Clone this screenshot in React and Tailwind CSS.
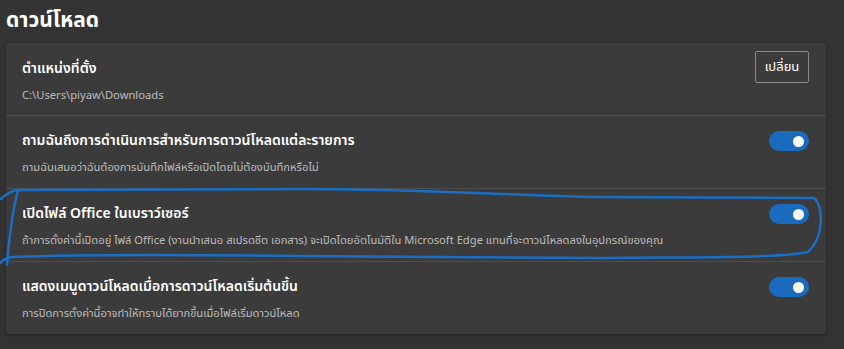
import React from "react";

const rows = [
  {
    title: "ถามฉันถึงการดำเนินการสำหรับการดาวน์โหลดแต่ละรายการ",
    sub: "ถามฉันเสมอว่าฉันต้องการบันทึกไฟล์หรือเปิดโดยไม่ต้องบันทึกหรือไม่",
  },
  {
    title: "เปิดไฟล์ Office ในเบราว์เซอร์",
    sub: "ถ้าการตั้งค่านี้เปิดอยู่ ไฟล์ Office (งานนำเสนอ สเปรดชีต เอกสาร) จะเปิดโดยอัตโนมัติใน Microsoft Edge แทนที่จะดาวน์โหลดลงในอุปกรณ์ของคุณ",
  },
  {
    title: "แสดงเมนูดาวน์โหลดเมื่อการดาวน์โหลดเริ่มต้นขึ้น",
    sub: "การปิดการตั้งค่านี้อาจทำให้ทราบได้ยากขึ้นเมื่อไฟล์เริ่มดาวน์โหลด",
  },
];

const Toggle = () => (
  <div className="w-[40px] h-[20px] rounded-full bg-[#1a6bbd] flex items-center justify-end pr-[5px] shrink-0">
    <div className="w-[11px] h-[11px] rounded-full bg-white" />
  </div>
);

const App = () => {
  return (
    <div className="relative w-[844px] h-[349px] bg-[#333333] overflow-hidden font-['Segoe_UI','Noto_Sans','Noto_Sans_Thai',sans-serif]">
      <div className="px-[6px] pt-[5px]">
        <h1 className="text-[21px] leading-[29px] font-bold text-white">ดาวน์โหลด</h1>

        <div className="mt-[9px] w-[820px] bg-[#3b3b3b] rounded-[4px] shadow-[0_1px_3px_rgba(0,0,0,0.35)]">
          {/* location */}
          <div className="h-[72px] pl-[16px] pr-[17px] flex items-start justify-between">
            <div className="pt-[15px]">
              <div className="text-[14px] leading-[20px] font-semibold text-white">ตำแหน่งที่ตั้ง</div>
              <div className="mt-[9px] text-[11.2px] leading-[16px] text-[#bdbdbd]">C:\Users\piyaw\Downloads</div>
            </div>
            <button className="mt-[8px] w-[54px] h-[32px] border border-[#8a8a8a] rounded-[2px] text-[13px] text-white">
              เปลี่ยน
            </button>
          </div>

          {rows.map((r, i) => (
            <div
              key={i}
              className="h-[73px] border-t border-[#4e4e4e] pl-[16px] pr-[17px] flex items-start justify-between"
            >
              <div className="pt-[14px]">
                <div className="text-[14px] leading-[20px] font-semibold text-white">{r.title}</div>
                <div className="mt-[9px] text-[11.2px] leading-[16px] text-[#bdbdbd]">{r.sub}</div>
              </div>
              <div className="pt-[15px]">
                <Toggle />
              </div>
            </div>
          ))}
        </div>
      </div>

      {/* hand-drawn annotation */}
      <svg className="absolute inset-0 pointer-events-none" width="844" height="349" viewBox="0 0 844 349">
        <path
          d="M1 199 C6 194 11 191 18 190 L300 189 C420 189 500 195 600 197 L814 198 C824 206 824 238 808 252 C780 258 700 257 600 258 L300 256 C150 254 60 255 12 257 C6 258 2 261 0 263"
          fill="none"
          stroke="#1a6fc4"
          strokeWidth="2.5"
          strokeLinecap="round"
        />
        <path
          d="M18 190 C12 212 9 240 7 265"
          fill="none"
          stroke="#1a6fc4"
          strokeWidth="2.5"
          strokeLinecap="round"
        />
      </svg>
    </div>
  );
};

export default App;
